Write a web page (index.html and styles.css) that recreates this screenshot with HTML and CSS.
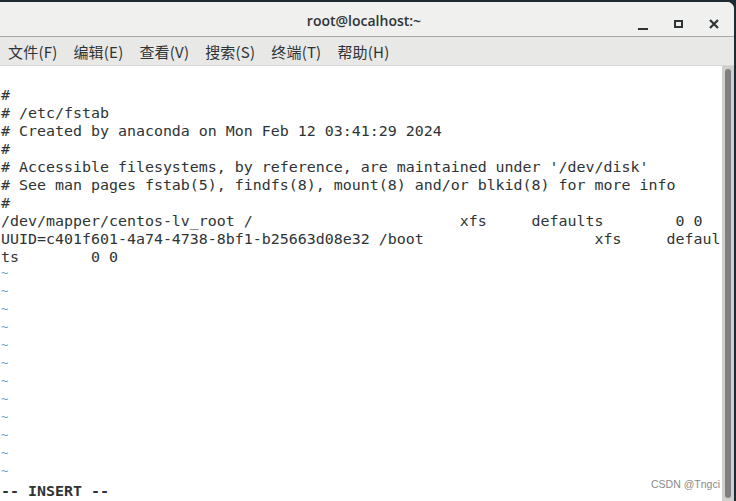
FILE: index.html
```html
<!DOCTYPE html>
<html lang="zh-CN">
<head>
    <meta charset="UTF-8">
    <title>root@localhost:~</title>
    <link rel="stylesheet" href="styles.css">
</head>
<body>
    <div class="window">
        <!-- barra de titulo -->
        <div class="titlebar">
            <span class="title">root@localhost:~</span>
            <div class="controls">
                <span class="ctl ctl-min"></span>
                <span class="ctl ctl-max"></span>
                <svg class="ctl-close" width="10" height="10" viewBox="0 0 10 10">
                    <path d="M1 1 L9 9 M9 1 L1 9" stroke="#2e3436" stroke-width="2.2" fill="none"/>
                </svg>
            </div>
        </div>

        <!-- menu -->
        <div class="menubar">
            <span>文件(F)</span>
            <span>编辑(E)</span>
            <span>查看(V)</span>
            <span>搜索(S)</span>
            <span>终端(T)</span>
            <span>帮助(H)</span>
        </div>

        <!-- terminal -->
        <div class="term">
            <div class="screen">
                <div class="ln"> </div>
                <div class="ln">#</div>
                <div class="ln"># /etc/fstab</div>
                <div class="ln"># Created by anaconda on Mon Feb 12 03:41:29 2024</div>
                <div class="ln">#</div>
                <div class="ln"># Accessible filesystems, by reference, are maintained under '/dev/disk'</div>
                <div class="ln"># See man pages fstab(5), findfs(8), mount(8) and/or blkid(8) for more info</div>
                <div class="ln">#</div>
                <div class="ln">/dev/mapper/centos-lv_root /                       xfs     defaults        0 0</div>
                <div class="ln">UUID=c401f601-4a74-4738-8bf1-b25663d08e32 /boot                   xfs     defaul</div>
                <div class="ln">ts        0 0</div>
                <div class="ln tilde">~</div>
                <div class="ln tilde">~</div>
                <div class="ln tilde">~</div>
                <div class="ln tilde">~</div>
                <div class="ln tilde">~</div>
                <div class="ln tilde">~</div>
                <div class="ln tilde">~</div>
                <div class="ln tilde">~</div>
                <div class="ln tilde">~</div>
                <div class="ln tilde">~</div>
                <div class="ln tilde">~</div>
                <div class="ln tilde">~</div>
                <div class="ln mode">-- INSERT --</div>
                <span class="watermark">CSDN @Tngci</span>
            </div>
            <div class="scrollbar">
                <div class="thumb"></div>
            </div>
        </div>
    </div>
</body>
</html>
```

FILE: styles.css
```css
body {
    margin: 0;
    padding: 0;
    background-color: #1b2a33;
    width: 736px;
    height: 501px;
    overflow: hidden;
}
.window {
    margin: 2px 2px 0 0;
    height: 499px;
    display: flex;
    flex-direction: column;
    background-color: #ffffff;
    border-top-right-radius: 7px;
    overflow: hidden;
}
.titlebar {
    position: relative;
    height: 34px;
    flex: none;
    background-color: #f0f0ef;
    border-bottom: 1px solid #a8a8a6;
    display: flex;
    align-items: center;
    justify-content: center;
}
.title {
    font-family: "Open Sans", sans-serif;
    font-size: 14px;
    font-weight: 600;
    color: #2e3436;
    margin-left: -6px;
    margin-top: 2px;
}
.controls {
    position: absolute;
    right: 15px;
    top: 0;
    height: 34px;
    display: flex;
    align-items: center;
    gap: 26px;
    padding-top: 5px;
}
.ctl-min {
    width: 10px;
    height: 2px;
    background-color: #2e3436;
    margin-top: 9px;
}
.ctl-max {
    width: 5px;
    height: 4px;
    border: 2px solid #2e3436;
}
.menubar {
    height: 28px;
    flex: none;
    background-color: #e8e8e7;
    border-bottom: 1px solid #d6d6d4;
    display: flex;
    align-items: center;
    gap: 16px;
    padding-left: 8px;
    font-family: "Noto Sans CJK SC", sans-serif;
    font-size: 15px;
    letter-spacing: 0.2px;
    color: #2e3436;
}
.term {
    flex: 1;
    display: flex;
    min-height: 0;
}
.screen {
    position: relative;
    flex: 1;
    font-family: "DejaVu Sans Mono", monospace;
    font-size: 14.95px;
    line-height: 18px;
    color: #2e3436;
    padding-left: 1px;
    padding-top: 2px;
}
.ln {
    height: 18px;
    white-space: pre;
}
.tilde {
    color: #6d9fd5;
    font-size: 12px;
    line-height: 14px;
}
.mode {
    font-weight: bold;
}
.watermark {
    position: absolute;
    right: 2px;
    bottom: 8px;
    font-family: "Liberation Sans", sans-serif;
    font-size: 10.5px;
    color: #8a8a8a;
}
.scrollbar {
    width: 12px;
    flex: none;
    background-color: #cfcfcd;
    padding: 3px;
    box-sizing: border-box;
}
.thumb {
    height: 100%;
    background-color: #7e7f7e;
    border-radius: 3px;
}
```
